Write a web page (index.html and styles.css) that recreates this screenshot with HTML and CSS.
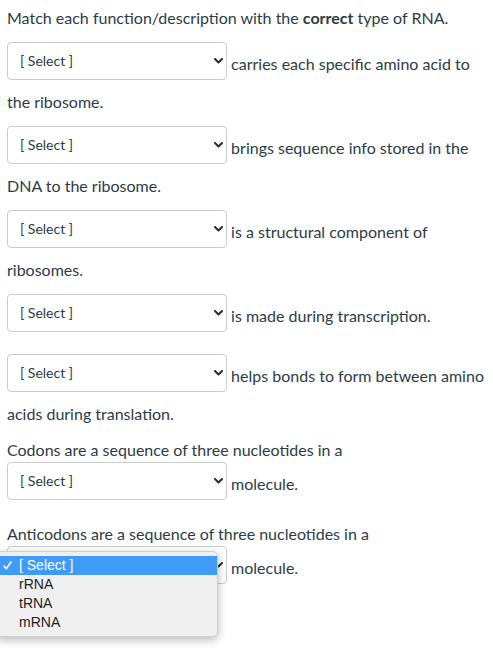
FILE: index.html
```html
<!DOCTYPE html>
<html>
<head>
<meta charset="utf-8">
<link rel="stylesheet" href="styles.css">
</head>
<body>
<div class="question">
  <p>Match each function/description with the <strong>correct</strong> type of RNA.</p>
  <p><span class="sel"><span class="sel-text">[ Select ]</span><svg class="chev" width="9" height="6" viewBox="0 0 9 6"><polyline points="1,1 4.5,4.5 8,1" /></svg></span> carries each specific amino acid to the ribosome.</p>
  <p><span class="sel"><span class="sel-text">[ Select ]</span><svg class="chev" width="9" height="6" viewBox="0 0 9 6"><polyline points="1,1 4.5,4.5 8,1" /></svg></span> brings sequence info stored in the DNA to the ribosome.</p>
  <p><span class="sel"><span class="sel-text">[ Select ]</span><svg class="chev" width="9" height="6" viewBox="0 0 9 6"><polyline points="1,1 4.5,4.5 8,1" /></svg></span> is a structural component of ribosomes.</p>
  <p><span class="sel"><span class="sel-text">[ Select ]</span><svg class="chev" width="9" height="6" viewBox="0 0 9 6"><polyline points="1,1 4.5,4.5 8,1" /></svg></span> is made during transcription.</p>
  <p><span class="sel"><span class="sel-text">[ Select ]</span><svg class="chev" width="9" height="6" viewBox="0 0 9 6"><polyline points="1,1 4.5,4.5 8,1" /></svg></span> helps bonds to form between amino acids during translation.</p>
  <p>Codons are a sequence of three nucleotides in a <span class="sel"><span class="sel-text">[ Select ]</span><svg class="chev" width="9" height="6" viewBox="0 0 9 6"><polyline points="1,1 4.5,4.5 8,1" /></svg></span> molecule.</p>
  <p>Anticodons are a sequence of three nucleotides in a <span class="sel sel-open"><span class="sel-text">[ Select ]</span><svg class="chev" width="9" height="6" viewBox="0 0 9 6"><polyline points="1,1 4.5,4.5 8,1" /></svg><span class="menu"><span class="opt opt-active"><svg class="check" width="9" height="9" viewBox="0 0 9 9"><polyline points="1,5 3.3,7.8 8,1" /></svg>[ Select ]</span><span class="opt">rRNA</span><span class="opt">tRNA</span><span class="opt">mRNA</span></span></span> molecule.</p>
</div>
</body>
</html>
```

FILE: styles.css
```css
html, body {
  margin: 0;
  background: #ffffff;
}

body {
  box-sizing: border-box;
  min-height: 648px;
  padding: 6px 8px 0 7px;
  font-family: Lato, "Open Sans", sans-serif;
  font-size: 16px;
  line-height: 24px;
  color: #2d3b45;
}

.question p {
  margin: 0 0 12px 0;
}

.question strong {
  font-weight: 700;
}

.sel {
  position: relative;
  display: inline-flex;
  align-items: center;
  justify-content: space-between;
  box-sizing: border-box;
  width: 220px;
  height: 38px;
  padding: 0 3px 0 12px;
  margin-bottom: 10px;
  border: 1px solid #c7cdd1;
  border-radius: 4px;
  background: #ffffff;
  vertical-align: 4px;
}

.sel-text {
  font-size: 14px;
  line-height: 16px;
  color: #2d3b45;
}

.chev {
  display: block;
}

.chev polyline {
  fill: none;
  stroke: #2b2b2b;
  stroke-width: 2;
  stroke-linecap: round;
  stroke-linejoin: round;
}

.menu {
  position: absolute;
  z-index: 5;
  top: 4px;
  left: -12px;
  width: 222px;
  box-sizing: border-box;
  padding: 4px 0;
  display: flex;
  flex-direction: column;
  background: #efefef;
  border: 1px solid #cfcfcf;
  border-radius: 5px;
  box-shadow: 0 3px 10px rgba(0, 0, 0, 0.28);
  font-family: "Liberation Sans", Arial, sans-serif;
  font-size: 14px;
  line-height: 19px;
  color: #222222;
}

.opt {
  position: relative;
  display: block;
  height: 19px;
  padding-left: 22px;
  white-space: nowrap;
}

.opt-active {
  background: #3f9bf8;
  color: #ffffff;
}

.check {
  position: absolute;
  left: 6px;
  top: 5px;
}

.check polyline {
  fill: none;
  stroke: #ffffff;
  stroke-width: 1.6;
  stroke-linecap: round;
  stroke-linejoin: round;
}
```
